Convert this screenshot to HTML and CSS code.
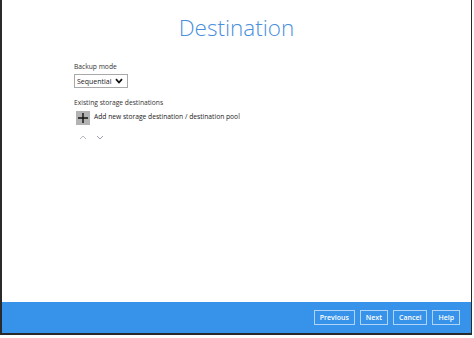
FILE: index.html
```html
<!DOCTYPE html>
<html lang="en">
<head>
    <meta charset="UTF-8">
    <title>Destination</title>
    <link rel="stylesheet" href="styles.css">
</head>
<body>
    <div class="window">
        <main class="content">
            <h1 class="title">Destination</h1>
            <section class="form">
                <label class="label">Backup mode</label>
                <div class="select">
                    <span>Sequential</span>
                    <svg width="8" height="6" viewBox="0 0 8 6"><path d="M1 1.2 L4 4.5 L7 1.2" fill="none" stroke="#111" stroke-width="1.8"/></svg>
                </div>
                <label class="label label-gap">Existing storage destinations</label>
                <div class="add-row">
                    <div class="add-btn">
                        <svg width="10" height="10" viewBox="0 0 10 10"><path d="M5 0 V10 M0 5 H10" stroke="#111" stroke-width="1.4"/></svg>
                    </div>
                    <span class="add-text">Add new storage destination / destination pool</span>
                </div>
                <div class="arrows">
                    <svg width="8" height="5" viewBox="0 0 8 5"><path d="M1 4 L4 1 L7 4" fill="none" stroke="#b4b8c0" stroke-width="1"/></svg>
                    <svg width="8" height="5" viewBox="0 0 8 5"><path d="M1 1 L4 4 L7 1" fill="none" stroke="#9aa0aa" stroke-width="1"/></svg>
                </div>
            </section>
        </main>
        <footer class="footer">
            <button class="btn">Previous</button>
            <button class="btn">Next</button>
            <button class="btn">Cancel</button>
            <button class="btn">Help</button>
        </footer>
    </div>
</body>
</html>
```

FILE: styles.css
```css
body {
    margin: 0;
    padding: 0;
    background: #ffffff;
    font-family: "Open Sans", "Noto Sans", sans-serif;
}

.window {
    width: 472px;
    height: 335px;
    box-sizing: border-box;
    border-left: 2px solid #2a2a2a;
    border-right: 1px solid #2a2a2a;
    border-bottom: 2px solid #2a2a2a;
    display: flex;
    flex-direction: column;
}

.content {
    flex: 1;
    padding: 0 0 0 72px;
}

.title {
    margin: 13px 0 0 -72px;
    text-align: center;
    font-weight: 300;
    font-size: 22.5px;
    line-height: 30px;
    color: #4a8fdc;
}

.form {
    padding-top: 19px;
    display: flex;
    flex-direction: column;
    align-items: flex-start;
}

.label {
    font-size: 6.7px;
    color: #333;
    line-height: 9px;
}

.label-gap {
    margin-top: 10px;
}

.select {
    margin-top: 3px;
    width: 54px;
    height: 14px;
    box-sizing: border-box;
    border: 1px solid #a9a9a9;
    display: flex;
    align-items: center;
    justify-content: space-between;
    padding: 0 4px 0 2px;
    font-size: 7px;
    color: #222;
}

.add-row {
    margin-top: 4px;
    display: flex;
    align-items: flex-start;
    gap: 4px;
    padding-left: 2px;
}

.add-btn {
    width: 14px;
    height: 14px;
    background: #b3b3b3;
    display: flex;
    align-items: center;
    justify-content: center;
}

.add-text {
    font-size: 6.7px;
    color: #222;
    line-height: 9px;
    margin-top: 1px;
}

.arrows {
    margin-top: 10px;
    padding-left: 5px;
    display: flex;
    gap: 9px;
}

.footer {
    height: 31px;
    background: #3793ea;
    display: flex;
    align-items: center;
    justify-content: flex-end;
    gap: 5px;
    padding-right: 11px;
}

.btn {
    height: 15px;
    padding: 0 5px;
    background: transparent;
    border: 1px solid rgba(255, 255, 255, 0.6);
    color: #fff;
    font-family: "Open Sans", "Noto Sans", sans-serif;
    font-size: 7px;
    font-weight: 600;
    line-height: 13px;
}
```
